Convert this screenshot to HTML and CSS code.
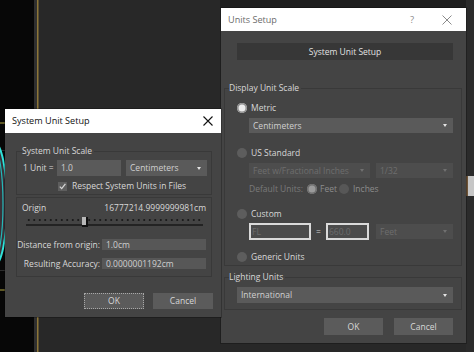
FILE: index.html
```html
<!DOCTYPE html>
<html lang="en">
<head>
<meta charset="utf-8">
<title>Units Setup</title>
<link rel="stylesheet" href="styles.css">
</head>
<body>
<svg class="viewport" width="474" height="352" viewBox="0 0 474 352">
  <rect width="474" height="352" fill="#282828"/>
  <rect x="220" y="0" width="254" height="8" fill="#1f1f1f"/>
  <rect x="0" y="0" width="34" height="352" fill="#070707"/>
  <rect x="34" y="0" width="3" height="352" fill="#2f2f2f"/>
  <rect x="37" y="0" width="1.5" height="352" fill="#8d7638"/>
  <g stroke="#2c2c2c" stroke-width="1">
    <line x1="0" y1="150.5" x2="6" y2="150.5"/>
    <line x1="0" y1="180.5" x2="6" y2="180.5"/>
    <line x1="0" y1="210.5" x2="6" y2="210.5"/>
    <line x1="0" y1="240.5" x2="6" y2="240.5"/>
    <line x1="0" y1="270.5" x2="6" y2="270.5"/>
  </g>
  <g stroke="#7d7530" stroke-width="1.5">
    <line x1="0" y1="123" x2="6" y2="123"/>
    <line x1="0" y1="290" x2="6" y2="290"/>
  </g>
  <ellipse cx="-6" cy="204" rx="13" ry="62" fill="#3b3138" stroke="#2fe3da" stroke-width="2"/>
  <ellipse cx="-6" cy="204" rx="9" ry="56" fill="none" stroke="#25b8b8" stroke-width="1.2"/>
  <rect x="466" y="0" width="8" height="352" fill="#2b2b2b"/>
  <rect x="467" y="176" width="7" height="20" fill="#c6c6c6"/>
  <rect x="466" y="176" width="2" height="20" fill="#6e5438"/>
</svg>

<div class="window dlg-units">
  <div class="titlebar">
    <span class="title">Units Setup</span>
    <span class="help">?</span>
    <svg class="close" width="10" height="10" viewBox="0 0 10 10"><path d="M0.5 0.5 L9.5 9.5 M9.5 0.5 L0.5 9.5" stroke="#8a8a8a" stroke-width="1"/></svg>
  </div>
  <div class="body">
    <div class="wide-btn">System Unit Setup</div>

    <fieldset class="group display-scale">
      <legend>Display Unit Scale</legend>
      <div class="opt first"><span class="radio on"></span>Metric</div>
      <div class="combo indent">Centimeters<span class="arrow"></span></div>

      <div class="opt gap-lg"><span class="radio"></span>US Standard</div>
      <div class="combo-row indent">
        <div class="combo off w-frac">Feet w/Fractional Inches<span class="arrow"></span></div>
        <div class="combo off w-small">1/32<span class="arrow"></span></div>
      </div>
      <div class="default-units indent">
        <span class="du-label">Default Units:</span>
        <span class="radio dim-on"></span><span class="du-feet">Feet</span>
        <span class="radio dim du-inches-radio"></span><span class="du-inches">Inches</span>
      </div>

      <div class="opt gap-md"><span class="radio"></span>Custom</div>
      <div class="custom-row indent">
        <div class="edit framed w-fl">FL</div>
        <span class="equals">=</span>
        <div class="edit framed w-num">660.0</div>
        <div class="combo off w-small">Feet<span class="arrow"></span></div>
      </div>

      <div class="opt gap-sm"><span class="radio"></span>Generic Units</div>
    </fieldset>

    <fieldset class="group lighting">
      <legend>Lighting Units</legend>
      <div class="combo intl">International<span class="arrow"></span></div>
    </fieldset>

    <div class="buttons">
      <div class="btn">OK</div>
      <div class="btn">Cancel</div>
    </div>
  </div>
</div>

<div class="window dlg-sys">
  <div class="titlebar">
    <span class="title">System Unit Setup</span>
    <svg class="close" width="10" height="10" viewBox="0 0 10 10"><path d="M0.5 0.5 L9.5 9.5 M9.5 0.5 L0.5 9.5" stroke="#111" stroke-width="1.1"/></svg>
  </div>
  <div class="body">
    <fieldset class="group scale">
      <legend>System Unit Scale</legend>
      <div class="unit-row">
        <span class="unit-label">1 Unit =</span>
        <div class="edit w-unit">1.0</div>
        <div class="combo w-cm">Centimeters<span class="arrow"></span></div>
      </div>
      <div class="check-row">
        <span class="check"><svg width="9" height="9" viewBox="0 0 9 9"><path d="M1.8 4.6 L3.7 6.6 L7.4 1.8" fill="none" stroke="#d6d6d6" stroke-width="1.3"/></svg></span>
        Respect System Units in Files
      </div>
    </fieldset>

    <fieldset class="group origin">
      <div class="origin-row">
        <span>Origin</span>
        <span>16777214.9999999981cm</span>
      </div>
      <div class="slider">
        <span class="ticks"></span>
        <span class="track"></span>
        <span class="thumb"></span>
      </div>
      <div class="field-row first">
        <span class="field-label">Distance from origin:</span>
        <div class="edit w-field">1.0cm</div>
      </div>
      <div class="field-row">
        <span class="field-label">Resulting Accuracy:</span>
        <div class="edit w-field">0.0000001192cm</div>
      </div>
    </fieldset>

    <div class="buttons">
      <div class="btn focus">OK</div>
      <div class="btn">Cancel</div>
    </div>
  </div>
</div>
</body>
</html>
```

FILE: styles.css
```css
* {
    box-sizing: border-box;
}
html, body {
    margin: 0;
    padding: 0;
}
body {
    width: 474px;
    height: 352px;
    overflow: hidden;
    position: relative;
    background: #282828;
    font-family: "Open Sans", "DejaVu Sans", sans-serif;
    font-size: 8.5px;
    line-height: 12px;
    color: #d8d8d8;
}
.viewport {
    position: absolute;
    left: 0;
    top: 0;
}

/* windows */
.window {
    position: absolute;
    background: #444;
    display: flex;
    flex-direction: column;
    box-shadow: 0 0 0 1px rgba(0,0,0,0.25);
}
.dlg-sys {
    left: 5px;
    top: 109px;
    width: 216px;
    height: 208px;
}
.dlg-units {
    left: 221px;
    top: 8px;
    width: 245px;
    height: 335px;
}
.titlebar {
    flex: none;
    display: flex;
    align-items: center;
    background: #fff;
}
.title {
    flex: 1;
    font-size: 9.1px;
}
.dlg-sys .titlebar {
    height: 24px;
    padding: 0 8px 0 7px;
    color: #111;
}
.dlg-units .titlebar {
    height: 23px;
    padding: 0 14px 0 7px;
    color: #6c6c6c;
}
.help {
    font-size: 9.5px;
    color: #8a8a8a;
    margin-right: 28px;
}
.close {
    display: block;
}
.body {
    flex: 1;
    display: flex;
    flex-direction: column;
}
.dlg-sys .body {
    padding: 0 9px 0 11px;
}
.dlg-units .body {
    padding: 0 4px 0 3px;
}

/* group boxes */
.group {
    margin: 0;
    min-width: 0;
    border: 1px solid #393939;
}
.group legend {
    padding: 0 2px 0 0;
    line-height: 12px;
}

/* common controls */
.edit, .combo {
    background: #5a5a5a;
    color: #d0d0d0;
    padding-left: 4px;
    white-space: nowrap;
}
.combo {
    display: flex;
    align-items: center;
    justify-content: space-between;
    padding-right: 6px;
}
.arrow {
    width: 0;
    height: 0;
    border-left: 2.5px solid transparent;
    border-right: 2.5px solid transparent;
    border-top: 3px solid #e4e4e4;
}
.combo.off {
    background: #4d4d4d;
    color: #6e6e6e;
}
.combo.off .arrow {
    border-top-color: #707070;
}
.btn {
    background: #5b5b5b;
    color: #d8d8d8;
    text-align: center;
}
.buttons {
    display: flex;
    justify-content: flex-end;
}
.radio {
    flex: none;
    width: 10px;
    height: 10px;
    border-radius: 50%;
    background: #5d5d5d;
}
.radio.on {
    background: #ececec;
    box-shadow: inset 0 0 0 1.5px #8e8e8e;
}
.radio.dim-on {
    background: #9a9a9a;
    box-shadow: inset 0 0 0 1.5px #6e6e6e;
}
.radio.dim {
    background: #575757;
}

/* System Unit Setup dialog */
.scale {
    margin-top: 12px;
    padding: 0 4px 3px 5px;
}
.unit-row {
    display: flex;
    align-items: center;
    height: 16px;
    margin-top: 3px;
}
.unit-label {
    width: 35px;
    padding-left: 1px;
}
.w-unit {
    width: 64px;
    height: 16px;
    line-height: 16px;
}
.w-cm {
    width: 81px;
    height: 16px;
    margin-left: 5px;
}
.check-row {
    display: flex;
    align-items: center;
    height: 10px;
    margin-top: 5px;
    padding-left: 36px;
}
.check {
    width: 9px;
    height: 9px;
    margin-right: 5px;
    background: #5e5e5e;
}
.check svg {
    display: block;
}
.origin {
    margin-top: 2px;
    padding: 4px 5px 7px 5px;
}
.origin-row {
    display: flex;
    justify-content: space-between;
}
.slider {
    position: relative;
    height: 12px;
    margin: 2px 3px 0 4px;
}
.ticks {
    position: absolute;
    left: 0;
    right: 0;
    top: 3px;
    height: 2px;
    background: radial-gradient(circle, #1c1c1c 0.9px, transparent 1.1px) 0 0 / 5.5px 2px repeat-x;
}
.track {
    position: absolute;
    left: 0;
    right: 0;
    top: 8px;
    height: 2px;
    background: #232323;
}
.thumb {
    position: absolute;
    left: 56px;
    top: 1px;
    width: 6px;
    height: 10px;
    background: #b8b8b8;
    border-right: 2px solid #111;
    border-bottom: 2px solid #111;
}
.field-row {
    display: flex;
    align-items: center;
    height: 11px;
    margin-top: 8px;
}
.field-row.first {
    margin-top: 11px;
}
.field-label {
    flex: none;
    display: flex;
    justify-content: flex-end;
    width: 81px;
    margin-left: -3px;
    white-space: nowrap;
}
.w-field {
    width: 104px;
    height: 11px;
    line-height: 11px;
    margin-left: 2px;
    background: #575757;
}
.dlg-sys .buttons {
    margin: 16px -1px 0 0;
    gap: 9px;
}
.dlg-sys .btn {
    width: 60px;
    height: 16px;
    line-height: 16px;
}
.btn.focus {
    border: 1px dotted #a8a8a8;
    line-height: 14px;
}

/* Units Setup dialog */
.wide-btn {
    margin: 12px 9px 0 13px;
    height: 17px;
    line-height: 17px;
    background: #373737;
    color: #e2e2e2;
    text-align: center;
}
.display-scale {
    margin-top: 22px;
    padding: 0 8px 2px 4px;
}
.opt {
    display: flex;
    align-items: center;
    gap: 4px;
    height: 12px;
    margin-left: 8px;
}
.opt.first {
    margin-top: 8px;
}
.opt.gap-lg {
    margin-top: 14px;
}
.opt.gap-md {
    margin-top: 13px;
}
.opt.gap-sm {
    margin-top: 11px;
}
.indent {
    margin-left: 20px;
}
.display-scale > .combo {
    height: 15px;
    margin-top: 4px;
}
.combo-row {
    display: flex;
    gap: 6px;
    margin-top: 4px;
}
.combo-row .combo {
    height: 15px;
}
.w-frac {
    width: 121px;
}
.w-small {
    width: 77px;
}
.default-units {
    display: flex;
    align-items: center;
    height: 12px;
    margin-top: 5px;
    color: #7a7a7a;
}
.du-label {
    width: 58px;
}
.du-feet {
    margin-left: 3px;
    color: #8c8c8c;
}
.du-inches-radio {
    margin-left: 2px;
}
.du-inches {
    margin-left: 4px;
    color: #8c8c8c;
}
.custom-row {
    display: flex;
    align-items: center;
    height: 17px;
    margin-top: 3px;
}
.edit.framed {
    height: 17px;
    line-height: 13px;
    border: 2px solid #dadada;
    background: #4b4b4b;
    color: #6c6c6c;
    padding-left: 1px;
}
.w-fl {
    width: 62px;
}
.w-num {
    width: 43px;
}
.equals {
    width: 15px;
    text-align: center;
    color: #cfcfcf;
}
.custom-row .combo {
    height: 15px;
    margin-left: 7px;
}
.lighting {
    margin-top: 5px;
    padding: 0 8px 6px 4px;
}
.intl {
    height: 16px;
    margin: 4px 0 0 8px;
}
.dlg-units .buttons {
    margin: 8px 9px 0 0;
    gap: 11px;
}
.dlg-units .btn {
    width: 59px;
    height: 17px;
    line-height: 17px;
}
```
